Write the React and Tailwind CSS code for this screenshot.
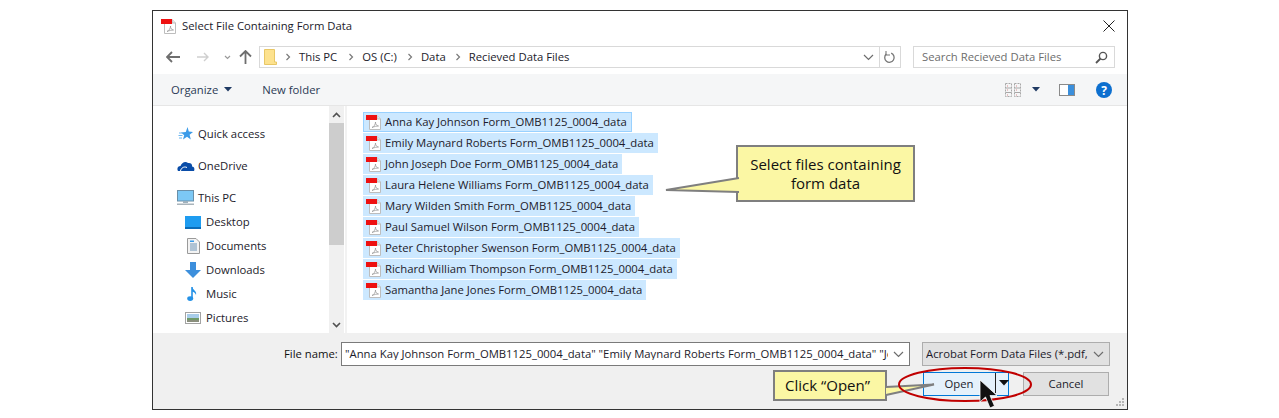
function PdfIcon({ className = "" }) {
  return (
    <svg viewBox="0 0 16 16" width="16" height="16" className={`shrink-0 ${className}`}>
      <path d="M3.5 1.5H11L14.5 5V15.5H3.5Z" fill="#fff" stroke="#bdbdbd" />
      <path d="M11 1.5V5H14.5" fill="#e6e6e6" stroke="#bdbdbd" />
      <rect x="0" y="1" width="11" height="5" fill="#ee1111" />
      <path d="M6 13.5C8 12.5 9.5 10.5 9.5 8C9.5 10.5 10.5 11.5 12.5 12C10.5 12 8.5 12.5 6 13.5Z" fill="none" stroke="#9a9a9a" strokeWidth="0.8" />
    </svg>
  );
}
const files = [
  "Anna Kay Johnson Form_OMB1125_0004_data",
  "Emily Maynard Roberts Form_OMB1125_0004_data",
  "John Joseph Doe Form_OMB1125_0004_data",
  "Laura Helene Williams Form_OMB1125_0004_data",
  "Mary Wilden Smith Form_OMB1125_0004_data",
  "Paul Samuel Wilson Form_OMB1125_0004_data",
  "Peter Christopher Swenson Form_OMB1125_0004_data",
  "Richard William Thompson Form_OMB1125_0004_data",
  "Samantha Jane Jones Form_OMB1125_0004_data",
];
const Chev = () => (
  <svg width="6" height="8" viewBox="0 0 6 8" className="shrink-0"><path d="M1.5 1L4.5 4L1.5 7" fill="none" stroke="#7a7a7a" strokeWidth="1.2" /></svg>
);
const Down = ({ c = "#6d6d6d" }) => (
  <svg width="11" height="7" viewBox="0 0 11 7" className="shrink-0"><path d="M1 1L5.5 5.5L10 1" fill="none" stroke={c} strokeWidth="1.2" /></svg>
);
const Caret = ({ c = "#1f3a63" }) => (
  <svg width="8" height="5" viewBox="0 0 8 5" className="shrink-0"><path d="M0 0H8L4 4.5Z" fill={c} /></svg>
);
const Star = () => (
  <svg width="16" height="16" viewBox="0 0 16 16"><path d="M9.5 1L10.8 5.6L15 6L11.6 8.8L12.8 13.5L9 10.8L5 13.5L6.2 9.2L3 6.6L7.8 6Z" fill="#3b9be8" /><path d="M1 7H5M0.5 9.5H4.5M1 12H4" stroke="#6bb6f0" strokeWidth="1" /></svg>
);
const Cloud = () => (
  <svg width="18" height="12" viewBox="0 0 18 12"><path d="M1 11C-0.5 8.5 1 6 3.5 6C4.5 2.5 8.5 0.5 11 3C14 2.5 15.5 4.5 15 6.5C17 6.5 18 8.5 17 11Z" fill="#0a4da8" /><path d="M3.5 11C4 8 7 6 10 7.5" fill="none" stroke="#fff" strokeWidth="1" /></svg>
);
const Monitor = () => (
  <svg width="18" height="16" viewBox="0 0 18 16"><rect x="0.5" y="0.5" width="16" height="10.5" fill="#7cc8f5" stroke="#6a8fa8" /><rect x="6" y="11" width="5" height="2" fill="#9fb1bd" /><rect x="0" y="13.5" width="17" height="1.5" fill="#a9b4bb" /></svg>
);
const Desktop = () => (
  <svg width="16" height="13" viewBox="0 0 16 13"><rect x="0" y="0" width="16" height="11" fill="#1e9cf0" /><rect x="0" y="11" width="16" height="2" fill="#0a6cb8" /></svg>
);
const Docs = () => (
  <svg width="13" height="16" viewBox="0 0 13 16"><path d="M0.5 0.5H9L12.5 4V15.5H0.5Z" fill="#f3f3f3" stroke="#9a9a9a" /><path d="M3 6H10M3 8H10M3 10H10M3 12H10" stroke="#6d93b5" /><path d="M3 2.5H7V4H3Z" fill="#3b9be8" /></svg>
);
const DownArrow = () => (
  <svg width="16" height="16" viewBox="0 0 16 16"><path d="M5 0H11V8H16L8 16L0 8H5Z" fill="#3d8fdc" /></svg>
);
const Note = () => (
  <svg width="12" height="16" viewBox="0 0 12 16"><path d="M5 1V12" stroke="#2491e6" strokeWidth="1.6" /><ellipse cx="3.2" cy="12.6" rx="3" ry="2.4" fill="#2491e6" /><path d="M5 1C6 4 10 5 9 9C8.5 7 7 6 5 5.5Z" fill="#2491e6" /></svg>
);
const Pic = () => (
  <svg width="16" height="12" viewBox="0 0 16 12"><rect x="0.5" y="0.5" width="15" height="11" fill="#fff" stroke="#a3a3a3" /><rect x="2" y="2" width="12" height="4" fill="#a8cdea" /><rect x="2" y="6" width="12" height="2" fill="#6f9a6a" /><rect x="2" y="8" width="12" height="2" fill="#8a8f7d" /></svg>
);
function Nav({ icon, label, sub, mb }) {
  return (
    <div className={`flex items-center h-6 ${sub ? "pl-[32px]" : "pl-[24px]"} ${mb ? "mb-2" : ""}`}>
      <span className={`flex items-center justify-center ${sub ? "w-4 mr-[5px]" : "w-[18px] mr-[3px]"}`}>{icon}</span>
      <span>{label}</span>
    </div>
  );
}
export default function App() {
  return (
    <div className="w-[1279px] h-[418px] bg-white overflow-hidden pt-[10px] pl-[152px] text-[11.3px] text-[#1c1b2b] leading-none" style={{ fontFamily: '"Open Sans", "Noto Sans", sans-serif' }}>
      <div className="relative w-[976px] h-[400px] border border-[#333] flex flex-col bg-white">
        {/* title */}
        <div className="h-[29px] shrink-0 flex items-center pl-[8px] pr-[12px]">
          <PdfIcon />
          <span className="ml-[5px]">Select File Containing Form Data</span>
          <svg className="ml-auto" width="12" height="12" viewBox="0 0 12 12"><path d="M0.5 0.5L11.5 11.5M11.5 0.5L0.5 11.5" stroke="#222" strokeWidth="1" /></svg>
        </div>
        {/* nav */}
        <div className="h-[34px] shrink-0 flex items-center pl-[13px] pr-[12px]">
          <svg width="14" height="12" viewBox="0 0 14 12"><path d="M6 1L1 6L6 11M1 6H14" fill="none" stroke="#6e6e6e" strokeWidth="1.8" /></svg>
          <svg className="ml-[17px]" width="12" height="10" viewBox="0 0 12 10"><path d="M7 1L11 5L7 9M11 5H0" fill="none" stroke="#cfcfcf" strokeWidth="1.4" /></svg>
          <svg className="ml-[15px]" width="7" height="5" viewBox="0 0 7 5"><path d="M1 1L3.5 3.5L6 1" fill="none" stroke="#9a9a9a" strokeWidth="1.2" /></svg>
          <svg className="ml-[8px]" width="13" height="14" viewBox="0 0 13 14"><path d="M1 6.5L6.5 1L12 6.5M6.5 1V14" fill="none" stroke="#6e6e6e" strokeWidth="1.8" /></svg>
          <div className="ml-[7px] w-[642px] h-[22px] border border-[#d9d9d9] flex items-center">
            <svg className="ml-[4px]" width="13" height="16" viewBox="0 0 13 16"><path d="M0.5 0.5H10.5V13H12.5V15.5H0.5Z" fill="#fde28e" stroke="#e8c766" /></svg>
            <span className="flex items-center ml-[8px] gap-[8px]"><Chev /><span>This PC</span></span>
            <span className="flex items-center ml-[11px] gap-[8px]"><Chev /><span>OS (C:)</span></span>
            <span className="flex items-center ml-[10px] gap-[8px]"><Chev /><span>Data</span></span>
            <span className="flex items-center ml-[9px] gap-[8px]"><Chev /><span>Recieved Data Files</span></span>
            <span className="ml-auto flex items-center h-full">
              <span className="pr-[5px]"><Down /></span>
              <span className="w-[21px] h-full border-l border-[#d9d9d9] flex items-center justify-center">
                <svg width="12" height="13" viewBox="0 0 12 13"><path d="M3 2.5A4.7 4.7 0 1 0 8 2.5" fill="none" stroke="#777" strokeWidth="1.3" transform="rotate(-10 6 7)" /><path d="M2 0V4H6" fill="none" stroke="#777" strokeWidth="1.1" /></svg>
              </span>
            </span>
          </div>
          <div className="ml-[12px] w-[202px] h-[22px] border border-[#d9d9d9] flex items-center pl-[8px] pr-[6px] text-[#6d6d6d]">
            <span>Search Recieved Data Files</span>
            <svg className="ml-auto" width="13" height="13" viewBox="0 0 13 13"><circle cx="8" cy="5" r="3.6" fill="none" stroke="#555" strokeWidth="1.4" /><path d="M5.5 7.5L1 12" stroke="#555" strokeWidth="1.8" /></svg>
          </div>
        </div>
        {/* toolbar */}
        <div className="h-[32px] shrink-0 bg-[#f5f6f7] border-b border-[#e6e6e6] flex items-center pl-[18px] pr-[15px] text-[#2b3a55]">
          <span>Organize</span>
          <span className="ml-[6px]"><Caret /></span>
          <span className="ml-[30px]">New folder</span>
          <svg className="ml-auto" width="16" height="14" viewBox="0 0 16 14"><g fill="none" stroke="#a8a8a8"><rect x="0.5" y="0.5" width="6" height="13" strokeDasharray="2 1" /><rect x="9.5" y="0.5" width="6" height="13" strokeDasharray="2 1" /><path d="M0.5 5H6.5M0.5 9.5H6.5M9.5 5H15.5M9.5 9.5H15.5" /></g><path d="M2 3H3M11 3H12M2 7H3M11 7H12M2 12H3M11 12H12" stroke="#d98a8a" /></svg>
          <span className="ml-[11px]"><Caret c="#1f3a63" /></span>
          <svg className="ml-[19px]" width="16" height="12" viewBox="0 0 16 12"><rect x="0.5" y="0.5" width="15" height="11" fill="#fff" stroke="#8a8a8a" /><rect x="9" y="1" width="6" height="10" fill="#3b8fdc" /></svg>
          <svg className="ml-[21px]" width="16" height="16" viewBox="0 0 16 16"><circle cx="8" cy="8" r="8" fill="#0d6fcf" /><text x="8" y="12.5" textAnchor="middle" fontSize="12" fontWeight="700" fill="#fff" fontFamily="Open Sans">?</text></svg>
        </div>
        {/* body */}
        <div className="flex-1 min-h-0 flex overflow-hidden">
          <div className="w-[176px] shrink-0 pt-[16px]">
            <Nav icon={<Star />} label="Quick access" mb />
            <Nav icon={<Cloud />} label="OneDrive" mb />
            <Nav icon={<Monitor />} label="This PC" />
            <Nav sub icon={<Desktop />} label="Desktop" />
            <Nav sub icon={<Docs />} label="Documents" />
            <Nav sub icon={<DownArrow />} label="Downloads" />
            <Nav sub icon={<Note />} label="Music" />
            <Nav sub icon={<Pic />} label="Pictures" />
          </div>
          <div className="w-[15px] shrink-0 bg-[#f0f0f0] flex flex-col items-center">
            <div className="h-[17px] flex items-center justify-center"><svg width="9" height="6" viewBox="0 0 9 6"><path d="M1 5L4.5 1.5L8 5" fill="none" stroke="#505050" strokeWidth="1.6" /></svg></div>
            <div className="w-full h-[122px] bg-[#cdcdcd]" />
            <div className="mt-auto h-[17px] flex items-center justify-center"><svg width="9" height="6" viewBox="0 0 9 6"><path d="M1 1L4.5 4.5L8 1" fill="none" stroke="#505050" strokeWidth="1.6" /></svg></div>
          </div>
          <div className="flex-1 border-l-2 border-[#f2f2f2] ml-[1px] pl-[16px] pt-[6px] flex flex-col gap-[1px]">
            {files.map((f, i) => (
              <div key={f} className={`w-fit h-[20px] flex items-center bg-[#cce8ff] pl-[3px] pr-[4px] ${i === 0 ? "border border-[#99d1ff] !pl-[2px]" : ""}`}>
                <PdfIcon />
                <span className="ml-[3px]">{f}</span>
              </div>
            ))}
          </div>
        </div>
        {/* footer */}
        <div className="h-[76px] shrink-0 bg-[#f0f0f0] relative pt-[9px] pl-[131px] flex flex-col">
          <div className="flex items-center h-[24px]">
            <span className="w-[53px] shrink-0 text-[#111] whitespace-nowrap">File name:</span>
            <div className="ml-[4px] shrink-0 w-[569px] h-[24px] bg-white border border-[#7a7a7a] flex items-center pl-[3px] pr-[5px]">
              <span className="flex-1 min-w-0 overflow-hidden whitespace-nowrap">"Anna Kay Johnson Form_OMB1125_0004_data" "Emily Maynard Roberts Form_OMB1125_0004_data" "John Joseph Doe</span>
              <span className="ml-[5px]"><Down /></span>
            </div>
            <div className="ml-[12px] shrink-0 w-[188px] h-[24px] bg-[#e1e1e1] border border-[#adadad] flex items-center pl-[3px] pr-[5px]">
              <span className="flex-1 min-w-0 overflow-hidden whitespace-nowrap">Acrobat Form Data Files (*.pdf,*.fdf)</span>
              <span className="ml-[5px]"><Down /></span>
            </div>
          </div>
          <div className="flex justify-end mt-[6px] pr-[18px]">
            <div className="w-[86px] h-[24px] bg-[#e5f1fb] border border-[#0078d7] flex items-center justify-center pr-[14px]">Open</div>
            <div className="ml-[14px] w-[86px] h-[24px] bg-[#e1e1e1] border border-[#adadad] flex items-center justify-center">Cancel</div>
          </div>
          <svg className="absolute right-[2px] bottom-[2px]" width="10" height="10" viewBox="0 0 10 10" fill="#b5b5b5"><rect x="7" y="1" width="2" height="2" /><rect x="4" y="4" width="2" height="2" /><rect x="7" y="4" width="2" height="2" /><rect x="1" y="7" width="2" height="2" /><rect x="4" y="7" width="2" height="2" /><rect x="7" y="7" width="2" height="2" /></svg>
        </div>

        {/* overlays: coordinates relative to dialog padding box (origin 153,11) */}
        <div className="absolute left-[583px] top-[134px] w-[179px] h-[57px] bg-[#fbf7a4] border-2 border-[#7f7f7f] flex items-center justify-center text-center text-[15px] leading-[19px] text-[#111]">Select files containing<br />form data</div>
        <svg className="absolute left-[510px] top-[160px]" width="78" height="26" viewBox="0 0 78 26"><path d="M76 7L3 19L76 21" fill="#fbf7a4" stroke="#7f7f7f" strokeWidth="2" /></svg>

        <div className="absolute left-[620px] top-[359px] w-[114px] h-[31px] bg-[#fbf7a4] border-2 border-[#7f7f7f] flex items-center pl-[10px] text-[15px] text-[#111]">Click “Open”</div>
        <svg className="absolute left-[731px] top-[370px]" width="54" height="16" viewBox="0 0 54 16"><path d="M2 6L50 3.5L2 14" fill="#fbf7a4" stroke="#7f7f7f" strokeWidth="2" /></svg>
        <svg className="absolute left-[744px] top-[355px]" width="136" height="37" viewBox="0 0 136 37"><ellipse cx="68" cy="18.5" rx="66" ry="16.5" fill="none" stroke="#c00000" strokeWidth="2" /></svg>
        <div className="absolute left-[842px] top-[362px] w-[1px] h-[20px] bg-[#222]" />
        <svg className="absolute left-[846px] top-[369px]" width="10" height="6" viewBox="0 0 10 6"><path d="M0 0H10L5 5.5Z" fill="#111" /></svg>
        <svg className="absolute left-[826px] top-[368px]" width="24" height="32" viewBox="0 0 24 32"><path d="M1 1V23L6.5 18L11 29L15.5 27L11 16.5H18Z" fill="#111" stroke="#fff" strokeWidth="0.8" /></svg>
      </div>
    </div>
  );
}
